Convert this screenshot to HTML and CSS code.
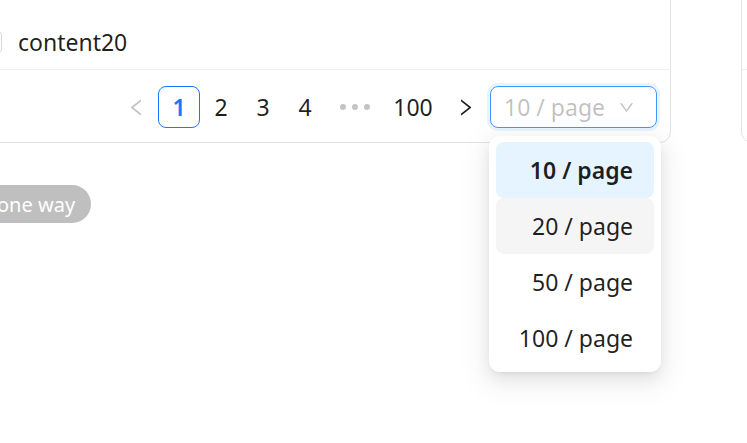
FILE: index.html
```html
<!DOCTYPE html>
<html>
<head>
<meta charset="utf-8">
<link rel="stylesheet" href="styles.css">
</head>
<body>
<div class="stage">
  <div class="cards">
    <div class="card main">
      <div class="row">
        <span class="checkbox"></span>
        <span class="cell">content20</span>
      </div>
      <div class="pager">
        <span class="item prev"><svg viewBox="64 64 896 896" width="19" height="19"><path fill="currentColor" d="M724 218.3V141c0-6.7-7.7-10.4-12.9-6.3L260.3 486.8a31.86 31.86 0 000 50.3l450.8 352.1c5.3 4.1 12.9.4 12.9-6.3v-77.3c0-4.9-2.3-9.6-6.1-12.6l-360-281 360-281.1c3.8-3 6.1-7.7 6.1-12.6z"/></svg></span>
        <span class="item active">1</span>
        <span class="item">2</span>
        <span class="item">3</span>
        <span class="item">4</span>
        <span class="item ellipsis"><i></i><i></i><i></i></span>
        <span class="item wide">100</span>
        <span class="item next"><svg viewBox="64 64 896 896" width="19" height="19"><path fill="currentColor" d="M765.7 486.8L314.9 134.7A7.97 7.97 0 00302 141v77.3c0 4.9 2.3 9.6 6.1 12.6l360 281.1-360 281.1c-3.8 3-6.1 7.6-6.1 12.6V883c0 6.6 7.6 10.3 12.9 6.3l450.8-352.1a31.96 31.96 0 000-50.4z"/></svg></span>
        <span class="select">
          <span class="placeholder">10 / page</span>
          <svg class="arrow" viewBox="64 64 896 896" width="15" height="15"><path fill="currentColor" d="M884 256h-75c-5.1 0-9.9 2.5-12.9 7L512 654.2 227.9 263c-3-4.5-7.8-7-12.9-7h-75c-6.5 0-10.3 7.4-6.5 12.1l353.7 487.5a31.9 31.9 0 0051.7 0l353.7-487.5c3.9-4.7.1-12.1-6.5-12.1z"/></svg>
        </span>
      </div>
    </div>
    <div class="card side">
      <div class="side-row"></div>
    </div>
  </div>
  <div class="tagline"><span class="tag">one way</span></div>
  <div class="dropdown">
    <div class="option selected">10 / page</div>
    <div class="option hover">20 / page</div>
    <div class="option">50 / page</div>
    <div class="option">100 / page</div>
  </div>
</div>
</body>
</html>
```

FILE: styles.css
```css
html, body {
  margin: 0;
  padding: 0;
  background: #ffffff;
  overflow: hidden;
}
body {
  font-family: "Noto Sans", "Open Sans", sans-serif;
  font-size: 23px;
  color: rgba(0, 0, 0, 0.88);
}
.stage {
  position: relative;
  width: 747px;
  height: 443px;
  overflow: hidden;
}
.cards {
  display: flex;
  gap: 70px;
  margin-left: -30px;
  margin-top: -10px;
}
.card {
  border: 1px solid #e3e3e3;
  border-radius: 0 0 11px 11px;
  box-sizing: border-box;
  flex-shrink: 0;
}
.main {
  width: 701px;
}
.side {
  width: 100px;
  height: 153px;
}
.side-row {
  height: 78px;
  border-bottom: 1px solid #f0f0f0;
}
.row {
  height: 79px;
  box-sizing: border-box;
  padding-top: 24px;
  display: flex;
  align-items: center;
  border-bottom: 1px solid #f0f0f0;
}
.checkbox {
  width: 22px;
  height: 24px;
  box-sizing: border-box;
  border: 1px solid #d9d9d9;
  border-radius: 5px;
  margin-left: 9px;
}
.cell {
  margin-left: 16px;
}
.pager {
  display: flex;
  justify-content: flex-end;
  align-items: center;
  padding: 16px 13px 13px 0;
}
.item {
  width: 42px;
  height: 42px;
  box-sizing: border-box;
  display: flex;
  align-items: center;
  justify-content: center;
  border-radius: 8px;
  border: 1px solid transparent;
  flex-shrink: 0;
}
.item.prev {
  width: 44px;
  color: rgba(0, 0, 0, 0.25);
}
.item.next {
  width: 38px;
  color: rgba(0, 0, 0, 0.88);
}
.item.active {
  border-color: #1677ff;
  color: #1677ff;
  font-weight: 600;
}
.item.ellipsis {
  width: 54px;
  gap: 6px;
  padding-left: 4px;
}
.item.ellipsis i {
  width: 6px;
  height: 6px;
  border-radius: 50%;
  background: #c4c4c4;
}
.item.wide {
  width: 66px;
}
.select {
  margin-left: 6px;
  width: 167px;
  height: 42px;
  box-sizing: border-box;
  border: 1px solid #4096ff;
  border-radius: 8px;
  box-shadow: 0 0 0 3px rgba(5, 145, 255, 0.1);
  display: flex;
  align-items: center;
  padding: 0 22px 0 13px;
  justify-content: space-between;
  color: rgba(0, 0, 0, 0.25);
}
.tagline {
  margin-top: 42px;
  display: flex;
}
.tag {
  margin-left: -19px;
  height: 38px;
  padding: 0 16px;
  border-radius: 19px;
  background: #bfbfbf;
  color: #ffffff;
  font-size: 20px;
  display: flex;
  align-items: center;
}
.dropdown {
  position: absolute;
  left: 489px;
  top: 136px;
  width: 172px;
  box-sizing: border-box;
  padding: 6px 7px;
  background: #ffffff;
  border-radius: 11px;
  box-shadow: 0 6px 16px 0 rgba(0, 0, 0, 0.08), 0 3px 6px -4px rgba(0, 0, 0, 0.12), 0 9px 28px 8px rgba(0, 0, 0, 0.05);
}
.option {
  height: 56px;
  border-radius: 8px;
  display: flex;
  align-items: center;
  justify-content: flex-end;
  padding-right: 21px;
}
.option.selected {
  background: #e6f4ff;
  font-weight: 600;
}
.option.hover {
  background: #f5f5f5;
}
```
